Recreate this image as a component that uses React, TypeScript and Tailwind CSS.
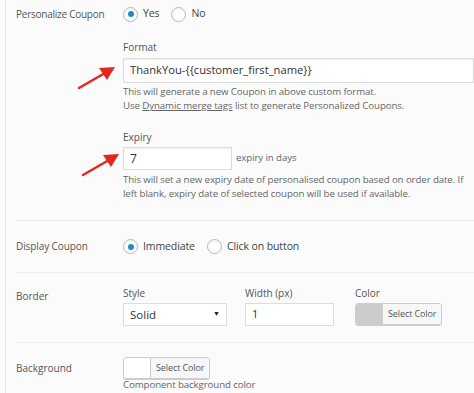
import React from 'react'

const font = { fontFamily: '"Open Sans", "Noto Sans", sans-serif' }

function Radio({ checked, label }: { checked?: boolean; label: string }) {
  return (
    <label className="flex items-center gap-[5px]">
      <span className="flex h-[15px] w-[15px] items-center justify-center rounded-full border border-[#b4b9be] bg-white shadow-[inset_0_1px_2px_rgba(0,0,0,0.07)]">
        {checked && <span className="h-[6px] w-[6px] rounded-full bg-[#1e8cbe]" />}
      </span>
      <span className="text-[10.5px] tracking-[-0.1px] text-[#444]">{label}</span>
    </label>
  )
}

function ColorButton({ swatch }: { swatch: string }) {
  return (
    <div className="flex h-[22px] w-fit overflow-hidden rounded-[3px] border border-[#ccc] shadow-[0_1px_0_#ccc]">
      <span className="w-[27px] border-r border-[#ccc]" style={{ background: swatch }} />
      <span className="flex items-center bg-[#f7f7f7] px-[5px] text-[9px] tracking-[-0.1px] text-[#555]">Select Color</span>
    </div>
  )
}

function Arrow() {
  return (
    <svg width="44" height="28" viewBox="0 0 44 28" className="pointer-events-none">
      <line x1="4" y1="24" x2="30" y2="9" stroke="#e3261f" strokeWidth="2.5" strokeLinecap="round" />
      <polygon points="40,3 24,4 32,16" fill="#e3261f" />
    </svg>
  )
}

export default function App() {
  return (
    <div className="relative h-[393px] w-[474px] overflow-hidden bg-white" style={font}>
      <div className="ml-[5px] h-full border-l border-[#e8e8e8] bg-[#fbfbfb] pl-[10px]">
        {/* personalize coupon */}
        <div className="flex border-b border-[#ececec] pb-[19px] pt-[6px]">
          <div className="w-[107px] text-[10px] leading-[16px] tracking-[-0.25px] text-[#555]">Personalize Coupon</div>
          <div className="flex-1">
            <div className="flex h-[16px] items-center gap-[12px]">
              <Radio checked label="Yes" />
              <Radio label="No" />
            </div>
            <div className="mt-[18px] text-[10px] leading-[14px] text-[#555]">Format</div>
            <div className="relative mt-[4px]">
              <div className="flex h-[25px] items-center border border-[#ddd] bg-white px-[6px] text-[11.2px] text-[#333] shadow-[inset_0_1px_2px_rgba(0,0,0,0.07)]">
                ThankYou-{'{{'}customer_first_name{'}}'}
              </div>
              <div className="absolute left-[-48px] top-[6px]">
                <Arrow />
              </div>
            </div>
            <p className="mt-[2px] text-[9.7px] leading-[14px] tracking-[-0.1px] text-[#666]">
              This will generate a new Coupon in above custom format.
              <br />
              Use <span className="underline">Dynamic merge tags</span> list to generate Personalized Coupons.
            </p>
            <div className="mt-[17px] text-[10px] leading-[14px] text-[#555]">Expiry</div>
            <div className="relative mt-[3px] flex items-center gap-[4px]">
              <div className="flex h-[23px] w-[109px] items-center border border-[#ddd] bg-white px-[6px] text-[12px] text-[#333] shadow-[inset_0_1px_2px_rgba(0,0,0,0.07)]">
                7
              </div>
              <span className="text-[9.7px] tracking-[-0.1px] text-[#666]">expiry in days</span>
              <div className="absolute left-[-44px] top-[4px]">
                <Arrow />
              </div>
            </div>
            <p className="mt-[3px] pr-[8px] text-[9.7px] leading-[14px] tracking-[-0.1px] text-[#666]">
              This will set a new expiry date of personalised coupon based on order date. If left blank, expiry date of selected coupon will be used if available.
            </p>
          </div>
        </div>

        {/* display coupon */}
        <div className="flex h-[52px] items-center border-b border-[#ececec]">
          <div className="w-[107px] text-[10px] tracking-[-0.1px] text-[#555]">Display Coupon</div>
          <div className="flex items-center gap-[12px]">
            <Radio checked label="Immediate" />
            <Radio label="Click on button" />
          </div>
        </div>

        {/* border */}
        <div className="flex h-[70px] border-b border-[#ececec] pt-[13px]">
          <div className="w-[107px] pt-[3px] text-[10px] text-[#555]">Border</div>
          <div className="flex gap-[18px]">
            <div>
              <div className="text-[10px] leading-[14px] text-[#555]">Style</div>
              <div className="mt-[3px] flex h-[23px] w-[104px] items-center justify-between border border-[#ddd] bg-white px-[6px] text-[11.5px] text-[#333]">
                Solid <span className="text-[7px] text-[#222]">▼</span>
              </div>
            </div>
            <div>
              <div className="text-[10px] leading-[14px] text-[#555]">Width (px)</div>
              <div className="mt-[3px] flex h-[23px] w-[89px] items-center border border-[#ddd] bg-white px-[6px] text-[11px] text-[#333]">
                1
              </div>
            </div>
            <div className="ml-[3px]">
              <div className="text-[10px] leading-[14px] text-[#555]">Color</div>
              <div className="mt-[3px]">
                <ColorButton swatch="#cccccc" />
              </div>
            </div>
          </div>
        </div>

        {/* background */}
        <div className="flex pt-[14px]">
          <div className="flex h-[22px] w-[107px] items-center text-[10px] text-[#555]">Background</div>
          <div>
            <ColorButton swatch="#ffffff" />
            <div className="mt-[-1px] text-[9.7px] leading-[14px] tracking-[-0.1px] text-[#666]">Component background color</div>
          </div>
        </div>
      </div>
    </div>
  )
}
